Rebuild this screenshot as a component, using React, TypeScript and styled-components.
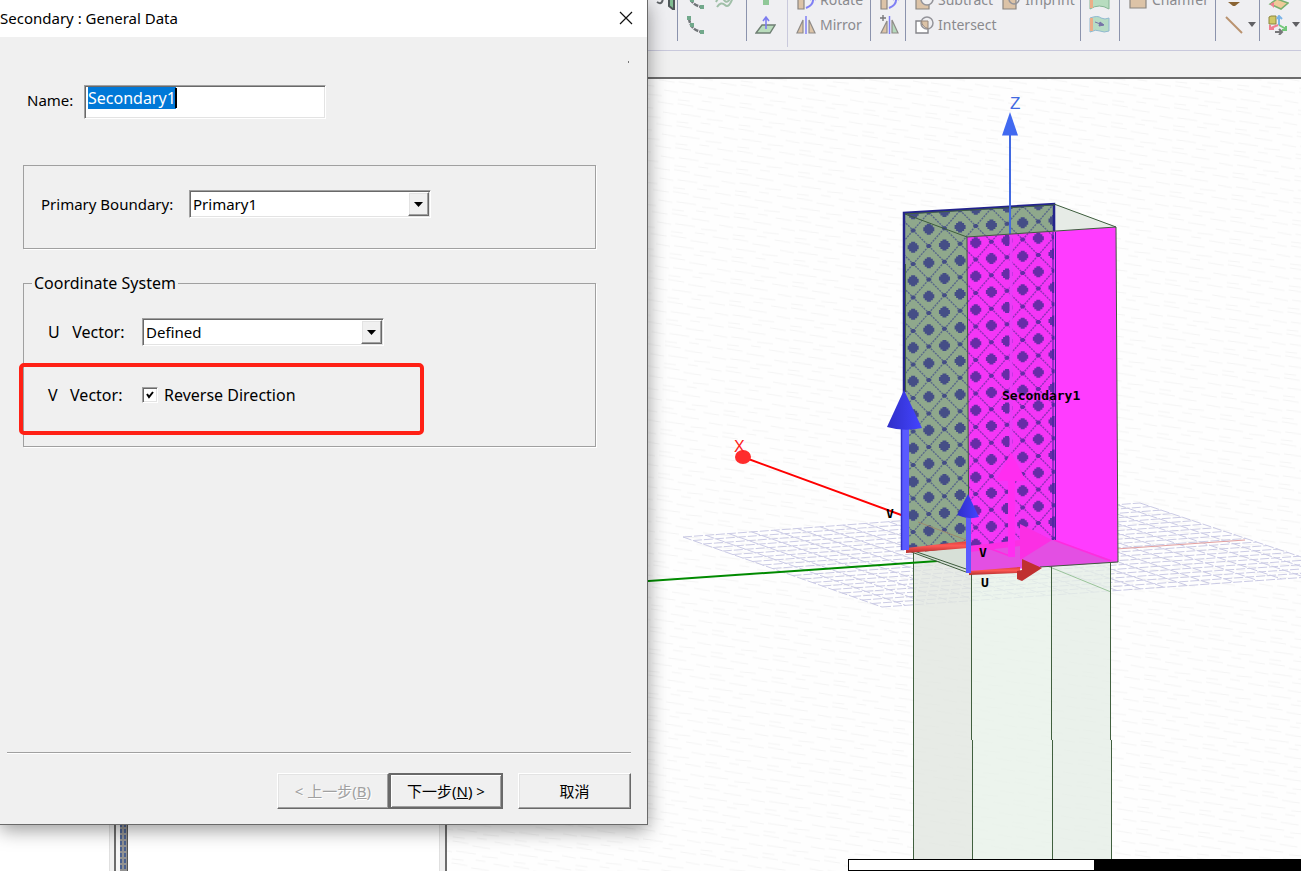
import React, { useEffect, useRef } from "react";
import styled, { createGlobalStyle, css } from "styled-components";

const Global = createGlobalStyle`
  * { box-sizing: border-box; }
  body {
    margin: 0;
    background: #fff;
    font-family: "Noto Sans", "Noto Sans CJK SC", sans-serif;
    font-size: 15px;
    color: #000;
  }
`;

const sunken = css`
  border: 1px solid;
  border-color: #a0a0a0 #fff #fff #a0a0a0;
  box-shadow: inset 1px 1px 0 #696969, inset -1px -1px 0 #e3e3e3;
`;

const raised = css`
  border: 1px solid;
  border-color: #fff #696969 #696969 #fff;
  box-shadow: inset -1px -1px 0 #a0a0a0, inset 1px 1px 0 #e3e3e3;
`;

const Desktop = styled.div`
  position: relative;
  display: flex;
  flex-direction: column;
  height: 100vh;
  min-height: 840px;
  overflow: hidden;
`;

/* ---------- ribbon ---------- */

const Ribbon = styled.header`
  display: flex;
  flex: none;
  align-items: flex-start;
  height: 51px;
  padding-left: 648px;
  overflow: hidden;
  background: #efeff2;
  border-bottom: 1px solid #c9c9dc;
`;

const Group = styled.div<{ $w: number; $tall?: boolean }>`
  flex: none;
  width: ${(p) => p.$w}px;
  height: ${(p) => (p.$tall ? 47 : 41)}px;
  border-right: 1px solid ${(p) => (p.$tall ? "#c9c9dc" : "#8b93ad")};
  padding-left: 8px;
  &:last-child {
    border-right: 0;
  }
`;

const ToolRow = styled.div<{ $first?: boolean }>`
  display: flex;
  gap: 8px;
  height: 25px;
  margin-top: ${(p) => (p.$first ? -13 : 0)}px;
`;

const Tool = styled.button`
  display: flex;
  align-items: center;
  gap: 3px;
  padding: 0;
  border: 0;
  background: none;
  color: #8a8a8e;
  font: 14px/20px "Noto Sans", sans-serif;
  white-space: nowrap;
  svg {
    flex: none;
  }
`;

const Strip = styled.div`
  flex: none;
  height: 28px;
  background: #f0f0f0;
  border-bottom: 2px solid #6c6c6c;
`;

const Caret = () => (
  <svg width="8" height="5" viewBox="0 0 8 5">
    <path d="M0 0h8L4 5z" fill="#606064" />
  </svg>
);

const iconPaths: Record<string, React.ReactNode> = {
  sheet: (
    <>
      <path d="M13 4l5 2v14l-5-4z" fill="#80bd92" stroke="#50585a" strokeWidth="2" />
      <path d="M1 12q6 4 6-6" fill="none" stroke="#606468" strokeWidth="2" />
    </>
  ),
  arc: (
    <>
      <path d="M3 3q1 12 13 14" fill="none" stroke="#707478" strokeWidth="2.500" strokeDasharray="5 1" />
      <path d="M1 1h4v4H1zM4 8h4v4H4zM14 15h4v4h-4z" fill="#71a88b" />
    </>
  ),
  wave: (
    <path d="M1 12q4-8 8-2t9-8M2 17q4-6 8-2t8-8" fill="none" stroke="#a0bfa8" strokeWidth="2" />
  ),
  point: <path d="M8 10h6v5H8z" fill="#90c898" />,
  plane: (
    <>
      <path d="M1 18l6-8h13l-5 8z" fill="#b9dcbc" stroke="#6f7f74" strokeWidth="1.400" />
      <path d="M11 14V3M8 6l3-4 3 4" fill="none" stroke="#7c7cf0" strokeWidth="1.600" />
    </>
  ),
  rotate: (
    <>
      <path d="M2 3h6v16H2z" fill="#dcc3a7" stroke="#8a8580" strokeWidth="1.200" />
      <path d="M10 18q8-3 7-10M14 10l3-4 3 4" fill="none" stroke="#8080f4" strokeWidth="2" />
    </>
  ),
  mirror: (
    <>
      <path d="M7 5v13H1zM13 5v13h6z" fill="#dcc3a7" stroke="#8f8b88" strokeWidth="1.200" />
      <path d="M10 1v18" stroke="#8080f4" strokeWidth="1.500" />
    </>
  ),
  mirrorAdd: (
    <>
      <path d="M8 6v12H2z" fill="#dcc3a7" stroke="#8f8b88" strokeWidth="1.200" />
      <path d="M13 5v13h6z" fill="#b5d9bc" stroke="#8f8b88" strokeWidth="1.200" />
      <path d="M10.500 1v18" stroke="#8080f4" strokeWidth="1.500" />
      <path d="M1 3h6M4 0v6" stroke="#77777a" strokeWidth="1.400" />
    </>
  ),
  subtract: (
    <>
      <path d="M2 5h13v14H2z" fill="#dcc3a7" stroke="#8a8580" strokeWidth="1.200" />
      <circle cx="13" cy="9" r="6" fill="#efeff2" stroke="#94949a" strokeWidth="1.600" />
    </>
  ),
  intersect: (
    <>
      <path d="M2 6h12v12H2z" fill="#fff" stroke="#85858a" strokeWidth="1.400" />
      <circle cx="13" cy="8" r="6" fill="#efeff2" stroke="#94949a" strokeWidth="1.500" />
      <path d="M7.500 6H14v7.500Q8 12 7.500 6z" fill="#dcc3a7" stroke="#94857a" />
    </>
  ),
  imprint: (
    <>
      <path d="M2 6h13v13H2z" fill="#dcc3a7" stroke="#8a8580" strokeWidth="1.200" />
      <circle cx="13" cy="9" r="5" fill="none" stroke="#94949a" strokeWidth="1.500" />
    </>
  ),
  flagGreen: (
    <>
      <path d="M1 5q9 4 19 0v14q-10-6-19 0z" fill="#b7dcbf" stroke="#86b595" />
      <path d="M1 5h3v13H1z" fill="#ecae88" />
    </>
  ),
  flag: (
    <>
      <path d="M1 3q8-3 11 0 4 2 8 0v13q-5 2-9 0-4-2-10 1z" fill="#b7dcc5" stroke="#8fb9d0" />
      <path d="M1 3h3v13H1z" fill="#ecae88" />
      <path d="M6 7l8 3M11 7l4 3-5 1z" fill="#7774a8" stroke="#7774a8" />
    </>
  ),
  chamfer: (
    <path d="M2 18V8l6-5h10v15z" fill="#dcc3a7" stroke="#8a8580" strokeWidth="1.200" />
  ),
  blob: <path d="M4 12h12l-5 4h-2z" fill="#8a6434" />,
  line: <path d="M2 2l16 16" stroke="#b9926f" strokeWidth="2" />,
  cube: (
    <>
      <path d="M2 14l7-5 11 4-7 6z" fill="#efc999" stroke="#78b070" strokeWidth="1.500" />
      <path d="M2 14l4-2v6z" fill="#f07f91" />
    </>
  ),
  axes: (
    <>
      <path d="M1 2l2-1h5v8H1z" fill="#d0c866" stroke="#8b8640" />
      <path d="M11 10V2M9 4l2-3 3 3" fill="none" stroke="#79b3e8" strokeWidth="2" />
      <path d="M11 10l7 4M14 15h4v-4" fill="none" stroke="#72c779" strokeWidth="2" />
      <path d="M10 10l-7 3M2 10v4h4" fill="none" stroke="#f07f91" strokeWidth="2" />
      <path d="M7 17h7M11 14l3 3-3 3" fill="none" stroke="#77777a" strokeWidth="2" />
    </>
  ),
};

const Icon = ({ name }: { name: string }) => (
  <svg width="21" height="20" viewBox="0 0 21 20" aria-hidden="true">
    {iconPaths[name]}
  </svg>
);

type Item = { icon: string; text?: string; menu?: boolean };
const groups: { w: number; tall?: boolean; top: Item[]; bottom: Item[] }[] = [
  { w: 30, top: [{ icon: "sheet" }], bottom: [] },
  { w: 69, top: [{ icon: "arc" }, { icon: "wave" }], bottom: [{ icon: "arc" }] },
  { w: 41, tall: true, top: [{ icon: "point" }], bottom: [{ icon: "plane" }] },
  { w: 83, top: [{ icon: "rotate", text: "Rotate" }], bottom: [{ icon: "mirror", text: "Mirror" }] },
  { w: 35, top: [{ icon: "rotate" }], bottom: [{ icon: "mirrorAdd" }] },
  {
    w: 175,
    top: [{ icon: "subtract", text: "Subtract" }, { icon: "imprint", text: "Imprint" }],
    bottom: [{ icon: "intersect", text: "Intersect" }],
  },
  { w: 39, top: [{ icon: "flagGreen" }], bottom: [{ icon: "flag" }] },
  { w: 96, top: [{ icon: "chamfer", text: "Chamfer" }], bottom: [] },
  { w: 44, top: [{ icon: "blob" }], bottom: [{ icon: "line", menu: true }] },
  { w: 44, top: [{ icon: "cube" }], bottom: [{ icon: "axes", menu: true }] },
];

const Tools = ({ items, first }: { items: Item[]; first?: boolean }) => (
  <ToolRow $first={first}>
    {items.map((t, i) => (
      <Tool key={i} type="button" aria-label={t.text ?? t.icon}>
        <Icon name={t.icon} />
        {t.text}
        {t.menu && <Caret />}
      </Tool>
    ))}
  </ToolRow>
);

/* ---------- workspace ---------- */

const Workspace = styled.div`
  display: flex;
  flex: 1;
  min-height: 0;
`;

const Pane = styled.div<{ $w: number; $gutter: number }>`
  flex: none;
  width: ${(p) => p.$w}px;
  border-right: 2px solid #6c6c6c;
  background: #fff;
  display: flex;
  justify-content: flex-end;
  &::after {
    content: "";
    width: ${(p) => p.$gutter}px;
    background: #f0f0f0;
    border-left: 1px solid #e0e0e0;
  }
`;

const Splitter = styled.div`
  flex: none;
  width: 12px;
  border-left: 4px solid #f6f6f6;
  border-right: 1px solid #555;
  background: repeating-linear-gradient(90deg, transparent 0 2px, #929292 2px 4px),
    repeating-linear-gradient(180deg, #4c6290 0 4px, #929292 4px 6px);
`;

const Viewport = styled.main`
  flex: 1;
  min-width: 0;
  svg {
    display: block;
    width: 100%;
    height: 100%;
  }
`;

type P = [number, number];
const lerp = (a: P, b: P, t: number): P => [a[0] + (b[0] - a[0]) * t, a[1] + (b[1] - a[1]) * t];
const floor = { l: [683, 537] as P, t: [1140, 503] as P, r: [1352, 574] as P, b: [882, 607] as P };
const steps = Array.from({ length: 21 }, (_, i) => i / 20);

const FloorGrid = () => (
  <g stroke="#b9b9dc" strokeWidth="1" strokeDasharray="9 2" opacity="0.75">
    {steps.map((t) => {
      const a = lerp(floor.l, floor.b, t);
      const b = lerp(floor.t, floor.r, t);
      const c = lerp(floor.l, floor.t, t);
      const d = lerp(floor.b, floor.r, t);
      return (
        <React.Fragment key={t}>
          <line x1={a[0]} y1={a[1]} x2={b[0]} y2={b[1]} />
          <line x1={c[0]} y1={c[1]} x2={d[0]} y2={d[1]} />
        </React.Fragment>
      );
    })}
  </g>
);

const CELL_W = 31.3;
const CELL_H = 33.5;
const cols = Array.from({ length: 11 }, (_, i) => i);
const rows = Array.from({ length: 24 }, (_, i) => i);

/* Dots and crossings alternate on a half-cell raster; diagonals join the crossings. */
const Lattice = ({ clip, dot, line }: { clip: string; dot: string; line: string }) => (
  <g clipPath={`url(#${clip})`}>
    {cols.map((c) =>
      rows.map((r) => {
        const x = 897.5 + (c * CELL_W) / 2;
        const y = 198 + (r * CELL_H) / 2 - c * 1.1;
        const isDot = (c + r) % 2 === 0;
        return (
          <g key={`${c}-${r}`} transform={`translate(${x} ${y})`}>
            {isDot ? (
              <path d="M-2-5.500h4v1.500h2v2h1.500v4H4v2H2v1.500h-4V4h-2V2h-1.500v-4H-4v-2h2z" fill={dot} />
            ) : (
              <>
                <path d="M0 0L15.650 15.650M0 0L15.650-17.850" stroke={line} strokeWidth="1.400" strokeDasharray="2 1" />
                <path d="M-1.500-2h3v1h1v2h-1v1h-3V1h-1v-2h1z" fill={dot} />
              </>
            )}
          </g>
        );
      })
    )}
  </g>
);

const Scene = () => (
  <svg viewBox="447 79 854 792" preserveAspectRatio="xMinYMin slice" role="img" aria-label="3D model">
    <defs>
      <pattern id="haze" width="62" height="22" patternUnits="userSpaceOnUse" patternTransform="rotate(3)">
        <path
          d="M0 2l16 2M20 6l18 2M42 1l16 2M4 12l20 2M30 16l16 1M48 11l14 2M0 20l12 1M24 20l10 1"
          stroke="#f4f4f4"
          strokeWidth="1.200"
        />
      </pattern>
      <clipPath id="backFace">
        <path d="M905 214L1054 204L1055 540L906 550z" />
      </clipPath>
      <clipPath id="overlap">
        <path d="M967 237L1054 231L1055 540L969 546z" />
      </clipPath>
      <linearGradient id="redPipe" x2="0" y2="1">
        <stop offset="0" stopColor="#d83c3c" />
        <stop offset=".4" stopColor="#ff5a55" />
        <stop offset="1" stopColor="#b42c2c" />
      </linearGradient>
      <linearGradient id="cone" x2="1" y2="0">
        <stop offset="0" stopColor="#2f2fc8" />
        <stop offset="1" stopColor="#4444ff" />
      </linearGradient>
    </defs>
    <rect x="447" y="79" width="1600" height="1500" fill="#fefefe" />
    <rect x="447" y="79" width="1600" height="1500" fill="url(#haze)" />

    <FloorGrid />
    <path d="M1116 549L1245 540" stroke="#e3a0a0" />

    {/* lower air box */}
    <g fillOpacity="0.8">
      <path d="M914 552L972 572V859H914z" fill="#e1e6e0" />
      <path d="M972 572L1052 567V859H972z" fill="#e7f1e9" />
      <path d="M1052 567L1111 562V859H1052z" fill="#e5ede6" />
    </g>
    <path d="M1040 563L1111 592" stroke="#9ac49a" />
    <path
      d="M913.500 552V859M971.500 570V740M972.500 740V859M1051.500 540V740M1052.500 740V859M1110.500 562V740M1111.500 740V859"
      stroke="#41603f"
      fill="none"
    />

    {/* axes behind the box */}
    <path d="M447 595L1010 556" stroke="#008a00" strokeWidth="2" />
    <path d="M743 457L904 516" stroke="#ff0000" strokeWidth="2" />
    <ellipse cx="743" cy="457" rx="8" ry="7" fill="#ff2c2c" />
    <text x="734" y="452" fill="#ff2020" fontFamily="Liberation Sans" fontSize="16">X</text>

    {/* top and left faces */}
    <path d="M905 214L1054 204L1117 227L967 237z" fill="#e6ebe6" />
    <path d="M905 214L1054 204L1055 540L906 550z" fill="#8fa88c" />
    <Lattice clip="backFace" dot="#454e86" line="#59688a" />
    <path d="M906 550L969 541V572z" fill="#d7e0d7" />
    <path d="M918 522L969 541" stroke="#9d8a6d" />

    {/* master plane outline */}
    <path d="M904 550V213L1054 204L1055 540" fill="none" stroke="#22228c" strokeWidth="2.500" />
    <path d="M905 214L1054 205M905.500 264V392" stroke="#41603f" />
    <path d="M1010 234V130" stroke="#4169e1" strokeWidth="2" />
    <path d="M1010 112L1002 135.500H1018z" fill="#4169f0" />
    <text x="1010" y="109" fill="#4169e1" fontFamily="Liberation Sans" fontSize="17">Z</text>

    {/* slave face */}
    <path d="M967 237L1116 227L1118 562L969 572z" fill="#ff3cff" />
    <path d="M967 237L1054 231L1055 540L969 546z" fill="#f436f6" />
    <Lattice clip="overlap" dot="#672ca7" line="#8c30b8" />
    <path d="M1011 235V452" stroke="#e93df6" strokeWidth="3" />
    <path d="M969 549L1054 540L1118 562L969 572z" fill="#e34fe3" />
    <path d="M1054 540L1111 561M980 545L1010 556" stroke="#ff2be0" strokeWidth="1.500" />
    <path d="M1053 232V540M1055.500 232V540" stroke="#3d249b" />
    <path d="M1020 524L1052 540L1020 560z" fill="#fb2fe4" />
    <path d="M969 546L1020 540V546L969 552z" fill="#fb2fe4" />
    <path d="M1011 452L996 481H1026z" fill="#ff2df0" />
    <path d="M1008 481H1015V557H1008z" fill="#ff2df0" />

    {/* box edges */}
    <g stroke="#3c5c3c" fill="none">
      <path d="M905 214L967 237L1116 227L1054 204M967 237L969 572M1116 227L1118 562L1040 567" />
      <path d="M914 551L969 570M906 550L966 572M925 551L969 546" />
    </g>

    {/* vector arrows */}
    <path d="M906 548L968 541V548L906 553z" fill="url(#redPipe)" />
    <path d="M901 428H909V550H901z" fill="#5a5aff" />
    <path d="M901.500 428V550" stroke="#3030c8" strokeWidth="1.500" />
    <path d="M904 390L887 427Q904 432 922 428z" fill="url(#cone)" />
    <path d="M969 571L1020 567V573L969 575z" fill="url(#redPipe)" />
    <path d="M1022 559L1042 568L1022 581L1017 579V571L1022 570z" fill="#c03030" />
    <path d="M966 514H971V573H966z" fill="#5a5aff" />
    <path d="M968 494L957 515Q968 520 979 517z" fill="url(#cone)" />

    <g fontFamily="DejaVu Sans Mono" fontWeight="700" fontSize="13">
      <text x="1002" y="400">Secondary1</text>
      <text x="886" y="518">V</text>
      <text x="979" y="557">V</text>
      <text x="981" y="587">U</text>
    </g>

    {/* scale bar */}
    <rect x="848.500" y="859.500" width="246" height="11" fill="#fff" stroke="#000" />
    <rect x="1094" y="859" width="246" height="12" />
  </svg>
);

/* ---------- dialog ---------- */

const Dialog = styled.section`
  position: absolute;
  left: 0;
  top: 0;
  display: flex;
  flex-direction: column;
  width: 648px;
  height: 825px;
  background: #f0f0f0;
  border: solid #6a6a6a;
  border-width: 0 1px 1px 0;
  box-shadow: 0 5px 18px rgba(0, 0, 0, 0.4);
`;

const TitleBar = styled.header`
  display: flex;
  flex: none;
  align-items: center;
  justify-content: space-between;
  height: 37px;
  padding: 0 14px 2px 0;
  background: #fff;
`;

const Title = styled.h1`
  margin: 0;
  font-size: 15px;
  font-weight: 400;
`;

const CloseButton = styled.button`
  display: flex;
  padding: 0;
  border: 0;
  background: none;
`;

const Form = styled.form`
  display: flex;
  flex: 1;
  flex-direction: column;
`;

const Hint = styled.div`
  height: 48px;
  padding: 24px 18px 0 0;
  display: flex;
  justify-content: flex-end;
  &::after {
    content: "";
    width: 1px;
    height: 2px;
    background: #777;
  }
`;

const NameRow = styled.div`
  display: flex;
  align-items: center;
  padding-left: 27px;
  margin-bottom: 46px;
`;

const Label = styled.label<{ $w: number; $large?: boolean }>`
  flex: none;
  width: ${(p) => p.$w}px;
  font-size: ${(p) => (p.$large ? 16 : 15)}px;
  line-height: 20px;
  white-space: pre;
`;

const NameLabel = styled(Label)`
  padding-bottom: 4px;
`;

const TextField = styled.span`
  position: relative;
  display: flex;
`;

const Input = styled.input`
  ${sunken}
  width: 242px;
  height: 34px;
  padding: 2px 3px 10px;
  border-radius: 0;
  outline: 0;
  background: #fff;
  font: inherit;
  font-size: 16px;
  line-height: 20px;
  &::selection {
    background: #0078d7;
    color: #fff;
  }
`;

const TextCaret = styled.i`
  position: absolute;
  left: 91px;
  top: 3px;
  width: 2px;
  height: 20px;
  background: #000;
`;

const GroupBox = styled.fieldset<{ $h: number }>`
  width: 573px;
  height: ${(p) => p.$h}px;
  margin: 0 0 0 23px;
  padding: 0;
  border: 1px solid #a0a0a0;
  box-shadow: 1px 1px 0 #fff;
`;

const FormGap = styled.div`
  height: 24px;
`;

const Legend = styled.legend`
  height: 20px;
  margin-left: 8px;
  padding: 0 2px;
  font-size: 16px;
  line-height: 20px;
`;

const FieldRow = styled.div<{ $top: number; $left: number }>`
  position: relative;
  display: flex;
  align-items: center;
  margin-top: ${(p) => p.$top}px;
  padding-left: ${(p) => p.$left}px;
`;

const SelectBox = styled.span`
  position: relative;
  display: flex;
`;

const Select = styled.select`
  ${sunken}
  appearance: none;
  width: 242px;
  height: 28px;
  padding: 0 24px 0 3px;
  border-radius: 0;
  background: #fff;
  color: #000;
  font: inherit;
`;

const Drop = styled.span`
  ${raised}
  position: absolute;
  right: 2px;
  top: 2px;
  width: 21px;
  height: 24px;
  display: flex;
  align-items: center;
  justify-content: center;
  background: #f0f0f0;
  pointer-events: none;
`;

const Check = styled.input`
  ${sunken}
  appearance: none;
  width: 16px;
  height: 16px;
  margin: 0 6px 0 0;
  background: #fff;
  &:checked {
    background: #fff
      url("data:image/svg+xml,%3Csvg xmlns='http://www.w3.org/2000/svg' width='14' height='14'%3E%3Cpath d='M4 6l2 3 4-5' fill='none' stroke='%23000' stroke-width='2'/%3E%3C/svg%3E")
      center no-repeat;
  }
`;

const Highlight = styled.div`
  position: absolute;
  left: -5px;
  top: -22px;
  width: 405px;
  height: 72px;
  border: 4px solid #ff2015;
  border-radius: 5px;
  pointer-events: none;
`;

const Footer = styled.footer`
  display: flex;
  justify-content: flex-end;
  margin: auto 16px 15px 7px;
  padding-top: 20px;
  border-top: 1px solid #a0a0a0;
  box-shadow: inset 0 1px 0 #fff;
`;

const Button = styled.button<{ $w: number; $default?: boolean; $gap?: number }>`
  ${raised}
  width: ${(p) => p.$w}px;
  height: 36px;
  margin-left: ${(p) => p.$gap ?? 0}px;
  padding: 0 0 2px;
  background: #f0f0f0;
  color: #000;
  font: inherit;
  ${(p) =>
    p.$default &&
    css`
      border: 2px solid #696969;
      box-shadow: inset 1px 1px 0 #fff, inset -1px -1px 0 #a0a0a0;
    `}
  &:disabled {
    color: #a0a0a0;
    text-shadow: 1px 1px 0 #fff;
  }
`;

const Combo = ({ id, value }: { id: string; value: string }) => (
  <SelectBox>
    <Select id={id} defaultValue={value}>
      <option>{value}</option>
    </Select>
    <Drop>
      <svg width="9" height="5" viewBox="0 0 9 5">
        <path d="M0 0h9L4.500 5z" />
      </svg>
    </Drop>
  </SelectBox>
);

export default function App() {
  const name = useRef<HTMLInputElement>(null);
  useEffect(() => {
    name.current?.focus();
    name.current?.select();
  }, []);

  return (
    <Desktop>
      <Global />
      <Ribbon>
        {groups.map((g, i) => (
          <Group key={i} $w={g.w} $tall={g.tall}>
            <Tools items={g.top} first />
            <Tools items={g.bottom} />
          </Group>
        ))}
      </Ribbon>
      <Strip />
      <Workspace>
        <Pane $w={116} $gutter={4} />
        <Splitter />
        <Pane $w={319} $gutter={5} />
        <Viewport>
          <Scene />
        </Viewport>
      </Workspace>

      <Dialog role="dialog" aria-labelledby="title">
        <TitleBar>
          <Title id="title">Secondary : General Data</Title>
          <CloseButton type="button" aria-label="Close">
            <svg width="14" height="14" viewBox="0 0 14 14">
              <path d="M1 1l12 12M13 1L1 13" stroke="#111" strokeWidth="1.200" />
            </svg>
          </CloseButton>
        </TitleBar>
        <Form onSubmit={(e) => e.preventDefault()}>
          <Hint />
          <NameRow>
            <NameLabel $w={57} htmlFor="name">Name:</NameLabel>
            <TextField>
              <Input id="name" ref={name} defaultValue="Secondary1" />
              <TextCaret />
            </TextField>
          </NameRow>
          <GroupBox $h={84}>
            <FieldRow $top={24} $left={17}>
              <Label $w={148} htmlFor="primary">Primary Boundary:</Label>
              <Combo id="primary" value="Primary1" />
            </FieldRow>
          </GroupBox>
          <FormGap />
          <GroupBox $h={174}>
            <Legend>Coordinate System</Legend>
            <FieldRow $top={25} $left={24}>
              <Label $w={94} $large htmlFor="u">{"U   Vector:"}</Label>
              <Combo id="u" value="Defined" />
            </FieldRow>
            <FieldRow $top={39} $left={24}>
              <Label as="span" $w={94} $large>{"V   Vector:"}</Label>
              <Check type="checkbox" id="reverse" defaultChecked />
              <Label $w={132} $large htmlFor="reverse">Reverse Direction</Label>
              <Highlight />
            </FieldRow>
          </GroupBox>
          <Footer>
            <Button type="button" $w={112} disabled>
              &lt; 上一步(<u>B</u>)
            </Button>
            <Button type="submit" $w={114} $default>
              下一步(<u>N</u>) &gt;
            </Button>
            <Button type="button" $w={113} $gap={15}>取消</Button>
          </Footer>
        </Form>
      </Dialog>
    </Desktop>
  );
}
